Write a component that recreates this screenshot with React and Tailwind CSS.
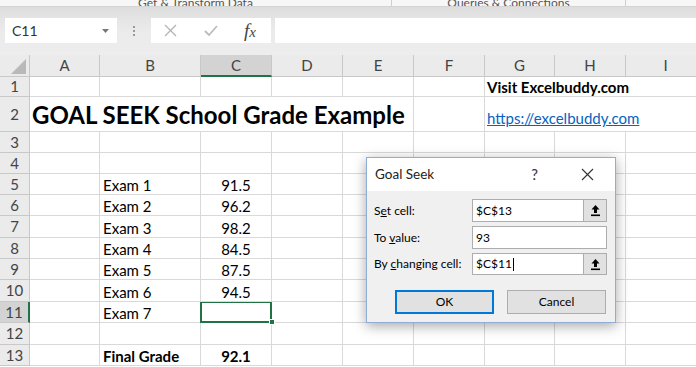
import React from "react";

const cols = [
  { k: "A", w: 70 },
  { k: "B", w: 101 },
  { k: "C", w: 71 },
  { k: "D", w: 71 },
  { k: "E", w: 71 },
  { k: "F", w: 71 },
  { k: "G", w: 70 },
  { k: "H", w: 71 },
  { k: "I", w: 80 },
];

const gridCols = "grid grid-cols-[30px_70px_101px_71px_71px_71px_71px_70px_71px_80px] grid-rows-[100%] overflow-hidden";

function UpArrowBtn() {
  return (
    <div className="w-[23px] h-full bg-[#e1e1e1] border-l border-[#adadad] flex items-center justify-center">
      <svg width="11" height="13" viewBox="0 0 11 13">
        <path d="M5.5 1 L1.5 5.5 H4 V9 H7 V5.5 H9.5 Z" fill="#000" />
        <rect x="1" y="10.5" width="9" height="1.6" fill="#000" />
      </svg>
    </div>
  );
}

function Row({ num, h, cells, selected }) {
  return (
    <div className={`${gridCols}`} style={{ height: h }}>
      <div
        className={`flex items-center justify-center text-[15px] leading-none text-[#444] border-b border-[#c8c8c8] ${
          selected
            ? "bg-[#d3d3d3] border-r-2 border-r-[#217346]"
            : "bg-[#ebebeb] border-r border-r-[#c8c8c8]"
        }`}
      >
        {num}
      </div>
      {cells}
    </div>
  );
}

function Cell({ span = 1, children, className = "" }) {
  const spanCls = { 1: "col-span-1", 2: "col-span-2", 3: "col-span-3", 4: "col-span-4", 5: "col-span-5" }[span];
  return (
    <div
      className={`${spanCls} min-h-0 border-r border-b border-[#d9d9d9] flex items-end whitespace-nowrap text-[15px] text-black leading-[17px] ${className}`}
    >
      {children}
    </div>
  );
}

function emptyCells(n) {
  return Array.from({ length: n }, (_, i) => <Cell key={"e" + i} />);
}

export default function App() {
  const exams = [
    ["Exam 1", "91.5"],
    ["Exam 2", "96.2"],
    ["Exam 3", "98.2"],
    ["Exam 4", "84.5"],
    ["Exam 5", "87.5"],
    ["Exam 6", "94.5"],
  ];
  const examHeights = [21, 21, 22, 21, 21, 22];

  return (
    <div className="w-[696px] h-[367px] overflow-hidden relative bg-white font-['Lato',sans-serif]">
      {/* ribbon strip */}
      <div className="h-[7px] bg-[#f7f7f7] border-b border-[#d4d4d4] flex overflow-hidden text-[12px] text-[#555] leading-[14px]">
        <div className="w-[392px] flex items-end justify-center border-r border-[#cfcfcf]">
          <span className="mb-[-4px]">Get &amp; Transform Data</span>
        </div>
        <div className="w-[234px] flex items-end justify-center border-r border-[#cfcfcf]">
          <span className="mb-[-4px]">Queries &amp; Connections</span>
        </div>
        <div className="flex-1" />
      </div>
      {/* formula bar */}
      <div className="h-[48px] bg-gradient-to-b from-[#dedede] via-[#ebebeb] to-[#ededed] flex items-start pt-[11px]">
        <div className="ml-[5px] w-[112px] h-[25px] bg-white flex items-center justify-between pl-[7px] pr-[8px]">
          <span className="text-[14px] text-[#333]">C11</span>
          <svg width="7" height="4" viewBox="0 0 7 4">
            <path d="M0 0 H7 L3.5 4 Z" fill="#777" />
          </svg>
        </div>
        <div className="w-[34px] h-[25px] flex flex-col items-center justify-center gap-[2px]">
          <div className="w-[2px] h-[2px] bg-[#9a9a9a]" />
          <div className="w-[2px] h-[2px] bg-[#9a9a9a]" />
          <div className="w-[2px] h-[2px] bg-[#9a9a9a]" />
        </div>
        <div className="w-[120px] h-[25px] bg-white flex items-center">
          <svg className="ml-[13px]" width="13" height="13" viewBox="0 0 13 13">
            <path d="M1 1 L12 12 M12 1 L1 12" stroke="#b4b4b4" strokeWidth="1.3" />
          </svg>
          <svg className="ml-[27px]" width="14" height="11" viewBox="0 0 14 11">
            <path d="M1 6 L5 10 L13 1" stroke="#bdbdbd" strokeWidth="1.8" fill="none" />
          </svg>
          <span className="ml-[26px] text-[19px] italic text-[#444] font-['Liberation_Serif',serif] leading-none">
            f<span className="text-[15px]">x</span>
          </span>
        </div>
        <div className="ml-[4px] flex-1 h-[25px] bg-white" />
      </div>
      {/* column headers */}
      <div className={`${gridCols} h-[22px]`}>
        <div className="bg-[#ebebeb] border-r border-b border-[#c8c8c8] flex items-end justify-end pr-[3px] pb-[2px]">
          <svg width="15" height="15" viewBox="0 0 15 15">
            <path d="M15 0 L15 15 L0 15 Z" fill="#b9b9b9" />
          </svg>
        </div>
        {cols.map((c) => (
          <div
            key={c.k}
            className={`flex items-center justify-center text-[15px] leading-none text-[#444] border-r border-[#c8c8c8] ${
              c.k === "C" ? "bg-[#d3d3d3] border-b-2 border-b-[#217346]" : "bg-[#ebebeb] border-b border-b-[#c8c8c8]"
            }`}
          >
            {c.k}
          </div>
        ))}
      </div>

      {/* rows */}
      <Row
        num="1"
        h={20}
        cells={[
          ...emptyCells(6),
          <Cell key="v" span={3} className="pl-[2px] font-bold">
            Visit Excelbuddy.com
          </Cell>,
        ]}
      />
      <Row
        num="2"
        h={35}
        cells={[
          <Cell key="t" span={5} className="pl-[2px] pb-[2px] text-[24px] leading-[28px] font-bold">
            GOAL SEEK School Grade Example
          </Cell>,
          <Cell key="f" />,
          <Cell key="l" span={3} className="pl-[2px] pb-[4px]">
            <span className="text-[#0563c1] underline">https://excelbuddy.com</span>
          </Cell>,
        ]}
      />
      <Row num="3" h={21} cells={emptyCells(9)} />
      <Row num="4" h={21} cells={emptyCells(9)} />
      {exams.map(([e, v], i) => (
        <Row
          key={e}
          num={String(i + 5)}
          h={examHeights[i]}
          cells={[
            <Cell key="a" />,
            <Cell key="b" className="pl-[3px]">
              {e}
            </Cell>,
            <Cell key="c" className="justify-center">
              {v}
            </Cell>,
            ...emptyCells(6),
          ]}
        />
      ))}
      <Row
        num="11"
        h={21}
        selected
        cells={[
          <Cell key="a" />,
          <Cell key="b" className="pl-[3px]">
            Exam 7
          </Cell>,
          <div key="c" className="relative border-r border-b border-[#d9d9d9]">
            <div className="absolute left-[-1px] top-[-1px] right-[-1px] bottom-[-1px] border-2 border-[#217346]" />
          </div>,
          ...emptyCells(6),
        ]}
      />
      <Row num="12" h={22} cells={emptyCells(9)} />
      <Row
        num="13"
        h={21}
        cells={[
          <Cell key="a" />,
          <Cell key="b" className="pl-[3px] font-bold">
            Final Grade
          </Cell>,
          <Cell key="c" className="justify-center font-bold">
            92.1
          </Cell>,
          ...emptyCells(6),
        ]}
      />

      {/* fill handle of selected cell */}
      <div className="absolute left-[269px] top-[319px] w-[6px] h-[6px] bg-[#217346] border border-white" />

      {/* Goal Seek dialog */}
      <div className="absolute left-[366px] top-[157px] w-[250px] h-[166px] bg-[#f0f0f0] border border-[#8eaed6] shadow-[0_3px_12px_rgba(0,0,0,0.35)] flex flex-col text-[12px] text-black">
        <div className="h-[33px] bg-white flex items-center">
          <span className="pl-[8px] text-[13.5px] text-[#222]">Goal Seek</span>
          <span className="ml-auto text-[15px] text-[#333] mr-[43px]">?</span>
          <svg className="mr-[21px]" width="13" height="13" viewBox="0 0 13 13">
            <path d="M1 1 L12 12 M12 1 L1 12" stroke="#333" strokeWidth="1.1" />
          </svg>
        </div>
        <div className="flex-1 flex flex-col pt-[8px] pl-[7px] pr-[8px]">
          <div className="flex items-center h-[23px]">
            <span className="w-[98px]">
              S<span className="underline">e</span>t cell:
            </span>
            <div className="flex-1 h-full bg-white border border-[#adadad] flex items-center">
              <span className="pl-[3px] flex-1">$C$13</span>
              <UpArrowBtn />
            </div>
          </div>
          <div className="flex items-center h-[23px] mt-[4px]">
            <span className="w-[98px]">
              To <span className="underline">v</span>alue:
            </span>
            <div className="flex-1 h-full bg-white border border-[#adadad] flex items-center">
              <span className="pl-[3px]">93</span>
            </div>
          </div>
          <div className="flex items-center h-[22px] mt-[4px]">
            <span className="w-[98px] whitespace-nowrap">
              By <span className="underline">c</span>hanging cell:
            </span>
            <div className="flex-1 h-full bg-white border border-[#adadad] flex items-center">
              <span className="pl-[3px] flex-1 flex items-center">
                $C$11<span className="inline-block w-px h-[13px] bg-black ml-px" />
              </span>
              <UpArrowBtn />
            </div>
          </div>
          <div className="flex mt-[15px] pl-[21px] gap-[13px]">
            <div className="w-[99px] h-[24px] bg-[#e1e1e1] border-2 border-[#0078d7] flex items-center justify-center">
              OK
            </div>
            <div className="w-[99px] h-[24px] bg-[#e1e1e1] border border-[#adadad] flex items-center justify-center">
              Cancel
            </div>
          </div>
        </div>
      </div>
    </div>
  );
}
